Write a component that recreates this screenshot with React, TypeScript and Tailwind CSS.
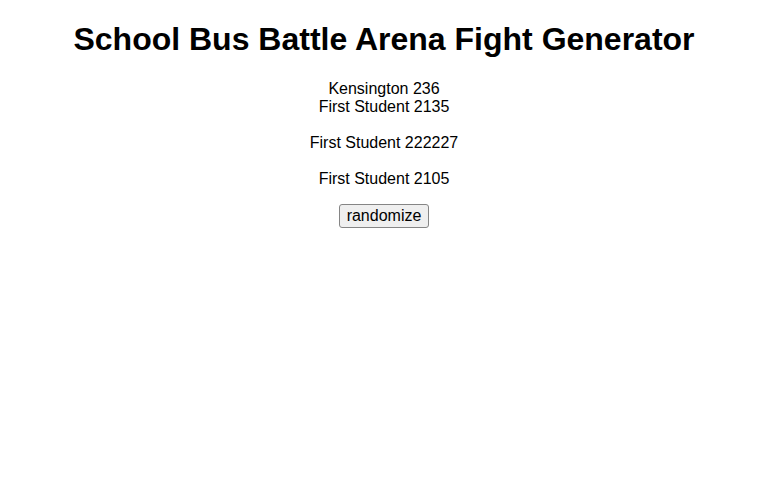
export default function App() {
  return (
    <div className="font-['Liberation_Sans',Arial,sans-serif] text-black text-center bg-white min-h-[480px] px-2">
      <h1 className="text-[32px] leading-[37px] font-bold pt-[21px] mb-[22px]">
        School Bus Battle Arena Fight Generator
      </h1>
      <div className="text-base leading-[18px]">
        <div>Kensington 236</div>
        <div>First Student 2135</div>
        <div className="mt-[18px]">First Student 222227</div>
        <div className="mt-[18px]">First Student 2105</div>
      </div>
      <button className="mt-[16px] text-base leading-[18px] bg-[#efefef] border border-[#858585] rounded-[3px] px-[7px] pt-[2px] pb-[2px]">
        randomize
      </button>
    </div>
  );
}
